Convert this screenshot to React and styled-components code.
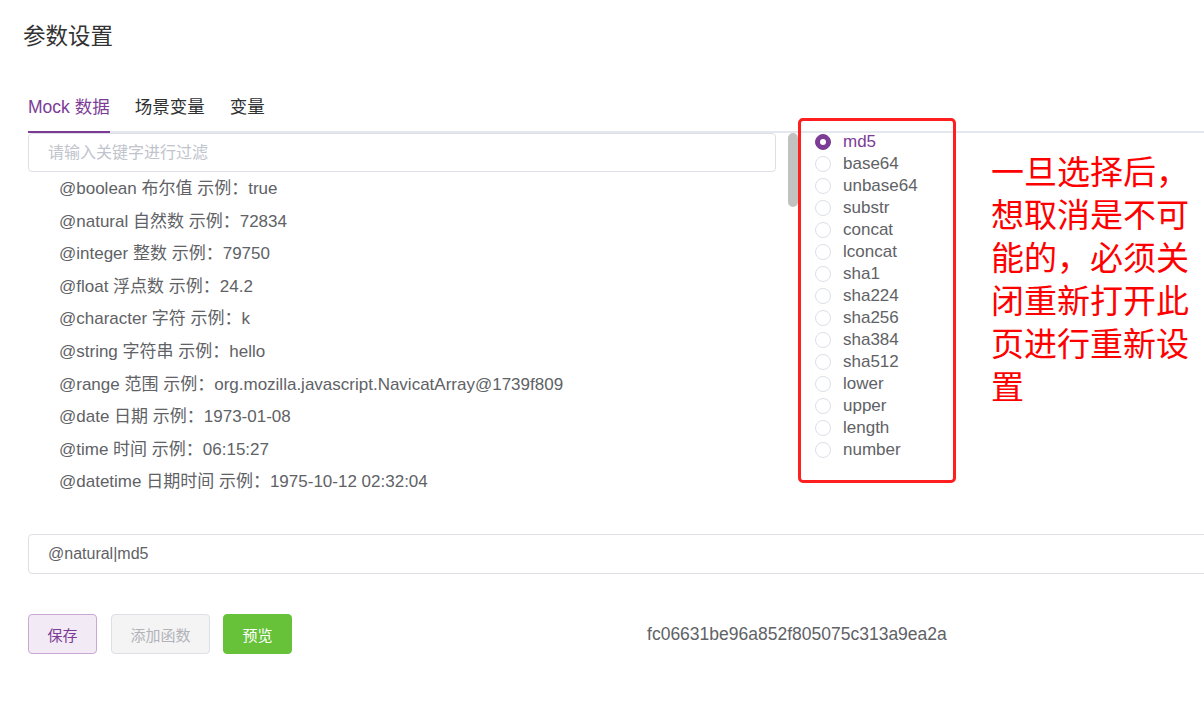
import React from "react";
import styled, { createGlobalStyle } from "styled-components";

const GlobalStyle = createGlobalStyle`
  html, body {
    margin: 0;
    padding: 0;
    background: #ffffff;
    overflow: hidden;
  }
  body {
    font-family: "Liberation Sans", "Noto Sans CJK SC", Arial, sans-serif;
    color: #606266;
  }
  * { box-sizing: border-box; }
`;

const PURPLE = "#7c3c96";

const Page = styled.div`
  position: relative;
  width: 1400px;
  padding: 22px 0 60px 28px;
`;

const Title = styled.h1`
  margin: 0 0 0 -5px;
  font-size: 22.5px;
  line-height: 30px;
  font-weight: normal;
  color: #333333;
`;

const TabBar = styled.div`
  margin-top: 39px;
  display: flex;
  gap: 25px;
  border-bottom: 2px solid #e4e7ed;
`;

const Tab = styled.div`
  position: relative;
  height: 40px;
  line-height: 33px;
  font-size: 17.5px;
  color: ${(p) => (p.$active ? PURPLE : "#303133")};
  &::after {
    content: "";
    display: ${(p) => (p.$active ? "block" : "none")};
    position: absolute;
    left: 0;
    right: 0;
    bottom: -2px;
    height: 2px;
    background: ${PURPLE};
  }
`;

const TabBody = styled.div`
  display: flex;
  align-items: flex-start;
`;

const TreePanel = styled.div`
  display: flex;
  height: 357px;
`;

const ScrollArea = styled.div`
  width: 760px;
  height: 100%;
  overflow: hidden;
`;

const ScrollTrack = styled.div`
  width: 10px;
  height: 100%;
`;

const ScrollThumb = styled.div`
  width: 10px;
  height: 74px;
  border-radius: 5px;
  background: #c1c1c1;
`;

const FilterInput = styled.input`
  display: block;
  width: 748px;
  height: 39px;
  padding: 0 19px;
  border: 1px solid #dcdfe6;
  border-radius: 4px;
  font-family: inherit;
  font-size: 16px;
  color: #606266;
  outline: none;
  &::placeholder {
    color: #c0c4cc;
  }
`;

const TreeList = styled.ul`
  list-style: none;
  margin: 0;
  padding: 1px 0 0;
`;

const TreeNode = styled.li`
  height: 32.6px;
  line-height: 32.6px;
  padding-left: 31px;
  font-size: 17px;
  color: #606266;
  white-space: nowrap;
`;

const RadioColumn = styled.div`
  margin: -2px 0 0 17px;
  display: flex;
  flex-direction: column;
`;

const RadioRow = styled.label`
  display: flex;
  align-items: center;
  height: 22px;
  gap: 12px;
  font-size: 17px;
  color: ${(p) => (p.$checked ? PURPLE : "#606266")};
`;

const RadioCircle = styled.span`
  display: flex;
  align-items: center;
  justify-content: center;
  width: 16px;
  height: 16px;
  border-radius: 50%;
  border: 1px solid ${(p) => (p.$checked ? PURPLE : "#dcdfe6")};
  background: ${(p) => (p.$checked ? PURPLE : "#ffffff")};
  &::after {
    content: "";
    width: 6px;
    height: 6px;
    border-radius: 50%;
    background: #ffffff;
    display: ${(p) => (p.$checked ? "block" : "none")};
  }
`;

const ExprInput = styled.input`
  display: block;
  margin-top: 44px;
  width: 1300px;
  height: 40px;
  padding: 0 19px;
  border: 1px solid #dcdfe6;
  border-radius: 4px;
  font-family: inherit;
  font-size: 16px;
  color: #606266;
  outline: none;
`;

const ActionRow = styled.div`
  margin-top: 40px;
  display: flex;
  align-items: center;
`;

const variants = {
  primary: { bg: "#f2eaf5", border: "#caa8d6", color: PURPLE },
  disabled: { bg: "#f4f4f5", border: "#dcdfe6", color: "#b1b3b8" },
  success: { bg: "#67c23a", border: "#67c23a", color: "#ffffff" },
};

const Button = styled.button`
  height: 40px;
  padding: 0 18.5px;
  margin-right: ${(p) => p.$gap || 0}px;
  border-radius: 4px;
  border: 1px solid ${(p) => variants[p.$variant].border};
  background: ${(p) => variants[p.$variant].bg};
  color: ${(p) => variants[p.$variant].color};
  font-family: inherit;
  font-size: 15px;
  cursor: pointer;
`;

const HashText = styled.span`
  margin-left: 355px;
  font-size: 17.5px;
  color: #606266;
`;

const AnnotationBox = styled.div`
  position: absolute;
  left: 798px;
  top: 118px;
  width: 158px;
  height: 365px;
  border: 3.5px solid #ff1f1f;
  border-radius: 5px;
  pointer-events: none;
`;

const AnnotationNote = styled.div`
  position: absolute;
  left: 991px;
  top: 149px;
  width: 202px;
  font-family: "Noto Sans CJK SC", sans-serif;
  font-size: 33px;
  line-height: 43px;
  color: #ff0000;
`;

const mockItems = [
  "@boolean 布尔值 示例：true",
  "@natural 自然数 示例：72834",
  "@integer 整数 示例：79750",
  "@float 浮点数 示例：24.2",
  "@character 字符 示例：k",
  "@string 字符串 示例：hello",
  "@range 范围 示例：org.mozilla.javascript.NavicatArray@1739f809",
  "@date 日期 示例：1973-01-08",
  "@time 时间 示例：06:15:27",
  "@datetime 日期时间 示例：1975-10-12 02:32:04",
];

const funcs = [
  "md5",
  "base64",
  "unbase64",
  "substr",
  "concat",
  "lconcat",
  "sha1",
  "sha224",
  "sha256",
  "sha384",
  "sha512",
  "lower",
  "upper",
  "length",
  "number",
];

export default function App() {
  return (
    <>
      <GlobalStyle />
      <Page>
        <Title>参数设置</Title>
        <TabBar>
          <Tab $active>Mock 数据</Tab>
          <Tab>场景变量</Tab>
          <Tab>变量</Tab>
        </TabBar>
        <TabBody>
          <TreePanel>
            <ScrollArea>
              <FilterInput placeholder="请输入关键字进行过滤" />
              <TreeList>
                {mockItems.map((t) => (
                  <TreeNode key={t}>{t}</TreeNode>
                ))}
              </TreeList>
            </ScrollArea>
            <ScrollTrack>
              <ScrollThumb />
            </ScrollTrack>
          </TreePanel>
          <RadioColumn>
            {funcs.map((f, i) => (
              <RadioRow key={f} $checked={i === 0}>
                <RadioCircle $checked={i === 0} />
                {f}
              </RadioRow>
            ))}
          </RadioColumn>
        </TabBody>
        <ExprInput defaultValue="@natural|md5" />
        <ActionRow>
          <Button $variant="primary" $gap={14}>保存</Button>
          <Button $variant="disabled" $gap={13}>添加函数</Button>
          <Button $variant="success">预览</Button>
          <HashText>fc06631be96a852f805075c313a9ea2a</HashText>
        </ActionRow>
        <AnnotationBox />
        <AnnotationNote>一旦选择后，想取消是不可能的，必须关闭重新打开此页进行重新设置</AnnotationNote>
      </Page>
    </>
  );
}
